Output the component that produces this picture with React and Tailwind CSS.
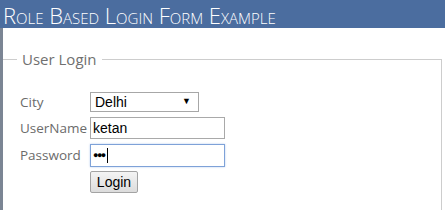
import React from 'react';

const labelCls = "w-[70px] text-[13.5px] text-[#6b6b6b] font-['Open_Sans',sans-serif]";

const App = () => {
  return (
    <div className="w-[445px] h-[210px] bg-white overflow-hidden">
      <div className="h-[28px] bg-[#4b6d9f] flex items-center pl-[3px]">
        <h1 className="text-white text-[22px] leading-none font-['Open_Sans',sans-serif] font-light [font-variant:small-caps] pt-[1px]">
          Role Based Login Form Example
        </h1>
      </div>

      <div className="h-[182px] border-l-[3px] border-[#7b8594] pt-[21px] pr-[3px]">
        <fieldset className="border border-l-0 border-[#cdcdcd] h-[200px] pt-[23px]">
          <legend className="ml-[14px] px-[5px] text-[15px] leading-[20px] text-[#707070] font-['Open_Sans',sans-serif]">
            User Login
          </legend>

          <div className="flex flex-col pl-[17px] font-['Liberation_Sans',Arial,sans-serif]">
            <div className="flex items-center h-[20px]">
              <span className={labelCls}>City</span>
              <div className="w-[109px] h-[20px] border border-[#a7a7a7] flex items-center justify-between pl-[4px] pr-[7px] text-[14px] text-black">
                <span>Delhi</span>
                <span className="text-[9px]">▼</span>
              </div>
            </div>

            <div className="flex items-center h-[22px] mt-[5px]">
              <span className={labelCls}>UserName</span>
              <div className="w-[135px] h-[22px] border border-[#a9a9a9] flex items-center pl-[2px] text-[14px] text-black">
                ketan
              </div>
            </div>

            <div className="flex items-center h-[23px] mt-[5px]">
              <span className={labelCls}>Password</span>
              <div className="w-[135px] h-[23px] border border-[#7ea2d8] shadow-[0_0_2px_#b9cdee] flex items-center pl-[2px] text-black">
                <span className="text-[9px] tracking-[-1.5px] leading-none">●●●</span>
                <span className="w-[1px] h-[15px] bg-black ml-[2px]"></span>
              </div>
            </div>

            <div className="flex mt-[4px] pl-[70px]">
              <button className="w-[48px] h-[22px] border border-[#a3a3a3] rounded-[2px] bg-gradient-to-b from-[#f4f4f4] to-[#dcdcdc] text-[14px] text-black leading-none">
                Login
              </button>
            </div>
          </div>
        </fieldset>
      </div>
    </div>
  );
};

export default App;
